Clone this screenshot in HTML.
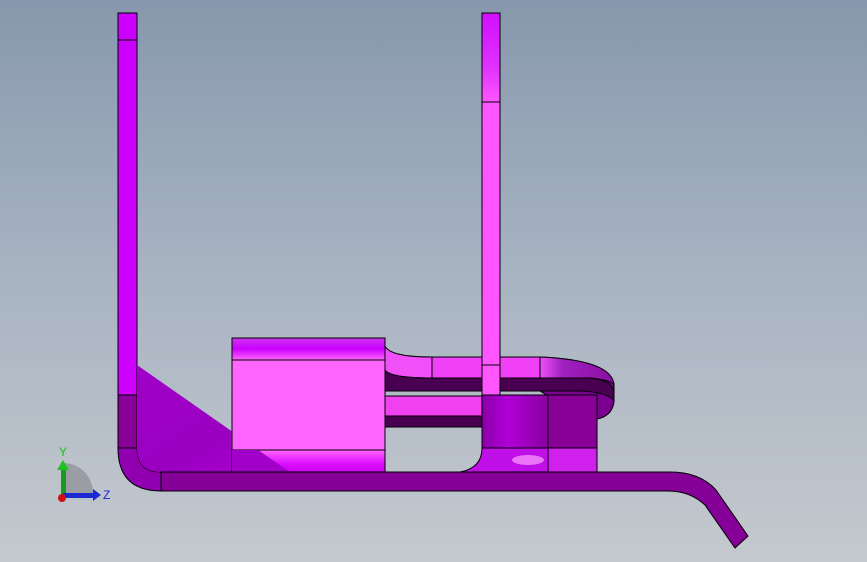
<!DOCTYPE html>
<html><head><style>
html,body{margin:0;padding:0;width:867px;height:562px;overflow:hidden}
body{background:linear-gradient(#8798ad 0%,#a9b4c2 50%,#c4c9ce 100%)}
svg{position:absolute;left:0;top:0}
</style></head><body>
<svg width="867" height="562" viewBox="0 0 867 562">
<defs>
<linearGradient id="band" x1="0" y1="0" x2="0" y2="1"><stop offset="0" stop-color="#cc33ee"/><stop offset="0.5" stop-color="#cc00ff"/><stop offset="1" stop-color="#ff66ff"/></linearGradient>
<linearGradient id="band2" x1="0" y1="0" x2="0" y2="1"><stop offset="0" stop-color="#ff66ff"/><stop offset="0.6" stop-color="#dd11ff"/><stop offset="1" stop-color="#cc00ee"/></linearGradient>
<linearGradient id="rb" x1="0" y1="0" x2="0" y2="1"><stop offset="0" stop-color="#d010ff"/><stop offset="0.6" stop-color="#e030ff"/><stop offset="1" stop-color="#ff55ff"/></linearGradient>
<linearGradient id="tri" x1="0" y1="0" x2="1" y2="1"><stop offset="0" stop-color="#a000c8"/><stop offset="0.6" stop-color="#9a00c0"/><stop offset="1" stop-color="#b000d8"/></linearGradient>
<linearGradient id="blk" x1="0" y1="0" x2="1" y2="0"><stop offset="0" stop-color="#8a00a8"/><stop offset="0.4" stop-color="#b000d8"/><stop offset="1" stop-color="#8800a0"/></linearGradient>
<linearGradient id="curl" x1="0" y1="0" x2="1" y2="0"><stop offset="0" stop-color="#f050f8"/><stop offset="0.3" stop-color="#a020c0"/><stop offset="1" stop-color="#8a10a0"/></linearGradient>
</defs>
<g stroke="#000" stroke-width="1">
<path d="M540,361 Q610,362 614,385 L614,402 Q612,416 597,419 L597,396 L548,396 L540,391 Z" fill="#7a0090"/>
<path d="M385,346 Q390,357 432,357 L540,357 Q612,360 614,385 Q612,380 590,378 L432,378 Q390,378 385,370 Z" fill="#f050f8"/>
<path d="M540,357 Q612,360 614,385 Q612,380 590,378 L540,378 Z" fill="url(#curl)"/>
<path d="M385,370 Q390,378 432,378 L590,378 Q612,380 614,392 L614,400 Q605,392 580,391 L385,391 Z" fill="#4a0052"/>
<rect x="432" y="357" width="108" height="21" fill="#f040f8"/>
<rect x="385" y="396" width="97" height="20" fill="#f040f0"/>
<rect x="385" y="416" width="97" height="11" fill="#4a0050"/>
<rect x="118" y="13" width="19" height="382" fill="#cc00ff"/>
<line x1="118" y1="40" x2="137" y2="40"/>
<rect x="118" y="395" width="19" height="53" fill="#880098"/>
<path d="M118,448 L137,448 Q137,472 161,472 L161,491 Q118,491 118,448 Z" fill="#9000b0"/>
<path d="M137,365 L290,472 L161,472 Q137,472 137,448 Z" fill="url(#tri)" stroke="none"/>
<rect x="232" y="338" width="153" height="22" fill="url(#band)"/>
<rect x="232" y="360" width="153" height="90" fill="#ff66ff"/>
<rect x="232" y="450" width="153" height="22" fill="url(#band2)"/>
<path d="M258,450 L290,472 L232,472 L232,450 Z" fill="#a000c8" stroke="none"/>
<rect x="482" y="13" width="18" height="382" fill="#ff55ff"/>
<rect x="482.5" y="13.5" width="17" height="88" fill="url(#rb)" stroke="none"/>
<line x1="482" y1="102" x2="500" y2="102"/>
<line x1="482" y1="365" x2="500" y2="365"/>
<rect x="482" y="395" width="66" height="53" fill="url(#blk)"/>
<rect x="548" y="395" width="49" height="53" fill="#880098"/>
<path d="M482,448 L548,448 L548,472 L460,472 Q482,468 482,448 Z" fill="#c010e8"/>
<ellipse cx="528" cy="460" rx="16" ry="5" fill="#ffa0ff" stroke="none" opacity="0.7"/>
<rect x="548" y="448" width="49" height="24" fill="#d020ee"/>
<path d="M161,472 L670,472 Q700,472 716,490 L748,536 L735,548 L705,505 Q690,491 668,491 L161,491 Z" fill="#840096"/>
</g>
<path d="M63,463 A30,30 0 0 1 93,493 L63,493 Z" fill="#9a9ea4"/>
<rect x="61" y="468" width="5" height="28" fill="#1a9a1a"/>
<path d="M57,470 L63,460 L69,470 Z" fill="#20c020"/>
<rect x="63" y="493" width="30" height="5" fill="#1a2ad0"/>
<path d="M93,489 L101,495 L93,501 Z" fill="#1a2ad0"/>
<circle cx="62" cy="498" r="4" fill="#d01010"/>
<text x="59" y="456" font-family="Liberation Sans,sans-serif" font-size="12" fill="#10c010">Y</text>
<text x="103" y="499" font-family="Liberation Sans,sans-serif" font-size="12" fill="#1a2ad0">Z</text>
</svg>
</body></html>
